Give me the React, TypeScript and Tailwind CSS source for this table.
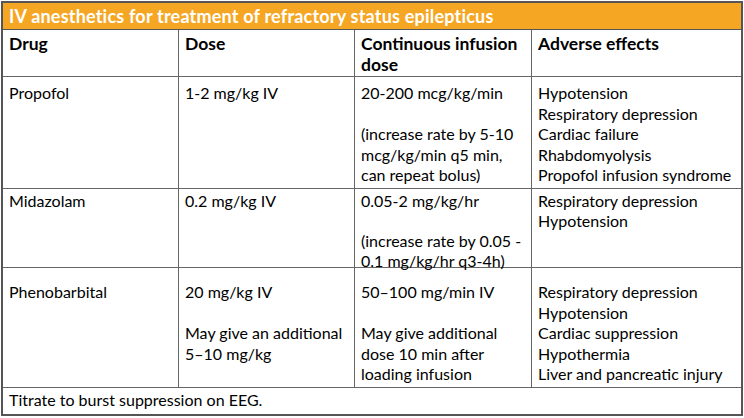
import React from "react";

const rows = [
  {
    drug: ["Propofol"],
    dose: ["1-2 mg/kg IV"],
    inf: ["20-200 mcg/kg/min", "", "(increase rate by 5-10", "mcg/kg/min q5 min,", "can repeat bolus)"],
    adv: ["Hypotension", "Respiratory depression", "Cardiac failure", "Rhabdomyolysis", "Propofol infusion syndrome"],
  },
  {
    drug: ["Midazolam"],
    dose: ["0.2 mg/kg IV"],
    inf: ["0.05-2 mg/kg/hr", "", "(increase rate by 0.05 -", "0.1 mg/kg/hr q3-4h)"],
    adv: ["Respiratory depression", "Hypotension"],
  },
  {
    drug: ["Phenobarbital"],
    dose: ["20 mg/kg IV", "", "May give an additional", "5\u201310 mg/kg"],
    inf: ["50\u2013100 mg/min IV", "", "May give additional", "dose 10 min after", "loading infusion"],
    adv: ["Respiratory depression", "Hypotension", "Cardiac suppression", "Hypothermia", "Liver and pancreatic injury"],
  },
];

function Lines({ lines, lh }: { lines: string[]; lh: string }) {
  return (
    <>
      {lines.map((l, i) => (
        <div key={i} className={`${lh} whitespace-nowrap`}>
          {l}
        </div>
      ))}
    </>
  );
}

export default function App() {
  const heights = ["h-[112px]", "h-[79px]", "h-[120px]"];
  const pads = ["pt-[6px]", "pt-[2px]", "pt-[14px]"];
  const lhs = ["h-[20.5px] leading-[20.5px]", "h-[20px] leading-[20px]", "h-[20.5px] leading-[20.5px]"];
  return (
    <div className="w-[744px] h-[418px] bg-white p-px" style={{ fontFamily: "Lato, 'Open Sans', sans-serif" }}>
      <div className="w-[742px] border-2 border-[#555] text-[16px] leading-[20.5px] text-black">
        <div className="h-[27px] bg-[#f5a623] border-b border-[#555] px-[6px] text-white font-bold text-[18px] leading-[26px] tracking-[0.2px]">
          IV anesthetics for treatment of refractory status epilepticus
        </div>
        <div className="grid grid-cols-[176px_176px_177px_1fr]">
          {["Drug", "Dose", "Continuous infusion dose", "Adverse effects"].map((h, i) => (
            <div
              key={h}
              className={`h-[47px] border-b border-[#666] px-[6px] pt-[4px] font-bold text-[17.5px] leading-[20.5px] ${i < 3 ? "border-r" : ""}`}
            >
              {h === "Continuous infusion dose" ? (
                <>
                  <div>Continuous infusion</div>
                  <div>dose</div>
                </>
              ) : (
                h
              )}
            </div>
          ))}
          {rows.map((r, ri) => (
            <React.Fragment key={ri}>
              {[r.drug, r.dose, r.inf, r.adv].map((c, ci) => (
                <div
                  key={ci}
                  className={`${heights[ri]} ${pads[ri]} border-b border-[#666] px-[6px] ${ci < 3 ? "border-r" : ""}`}
                >
                  <Lines lines={c} lh={lhs[ri]} />
                </div>
              ))}
            </React.Fragment>
          ))}
        </div>
        <div className="h-[26px] px-[6px] pt-[2px]">Titrate to burst suppression on EEG.</div>
      </div>
    </div>
  );
}
